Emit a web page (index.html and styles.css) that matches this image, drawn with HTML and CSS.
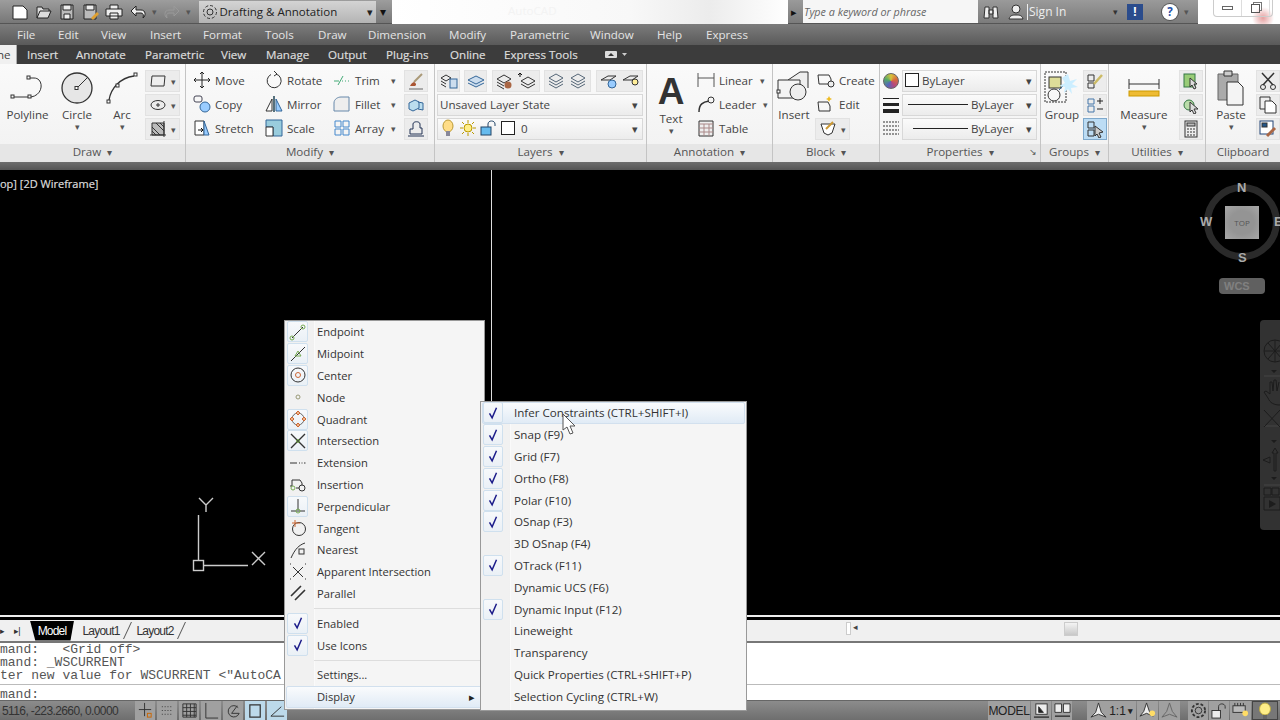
FILE: index.html
```html
<!DOCTYPE html>
<html lang="en">
<head>
    <meta charset="UTF-8">
    <title>Drafting &amp; Annotation</title>
    <link rel="stylesheet" href="styles.css">
</head>
<body>
<div class="app">
    <svg class="defs" width="0" height="0"><symbol id="tick" viewBox="0 0 16 16"><path d="M4 8.500l3 5L12 2" fill="none" stroke="#1c1c8a" stroke-width="1.700"/></symbol></svg>

    <!-- title bar -->
    <div class="titlebar">
        <div class="qat">
            <svg class="ic qi" viewBox="0 0 18 18"><path d="M2 3h10l4 4v9H2z" fill="#fff"/></svg>
            <svg class="ic qi" viewBox="0 0 18 18"><path d="M2 15V4h5l1 2h6v2M2 15l3-7h11l-3 7z" fill="#ddd"/></svg>
            <svg class="ic qi" viewBox="0 0 18 18"><path d="M3 2h12v14H3z" fill="#bbb"/><path d="M5 2h8v5H5zM6 11h6v5H6z" fill="#eee"/></svg>
            <svg class="ic qi" viewBox="0 0 18 18"><path d="M2 2h12v14H2z" fill="#bbb"/><path d="M4 2h8v5H4z" fill="#eee"/><path d="M9 15l6-6 2 2-6 6z" fill="#e0a030" stroke="none"/></svg>
            <svg class="ic qi" viewBox="0 0 18 18"><path d="M5 6V2h8v4M1 6h16v7H1zM5 10h8v6H5z" fill="#eee"/></svg>
            <svg class="ic qi" viewBox="0 0 18 18"><path d="M7 3L2 8l5 5v-3h5c2 0 3 2 2 5 3-2 3-8-2-8H7z" fill="#eee"/></svg>
            <span class="tiny">&#9662;</span>
            <svg class="ic qi dim" viewBox="0 0 18 18"><path d="M11 3l5 5-5 5v-3H6c-2 0-3 2-2 5-3-2-3-8 2-8h5z"/></svg>
            <span class="tiny">&#9662;</span>
            <div class="workspace">
                <svg class="ic" viewBox="0 0 18 18" width="18" height="18"><circle cx="9" cy="9" r="3"/><circle cx="9" cy="9" r="6.500" stroke-dasharray="3 2"/></svg>
                <span>Drafting &amp; Annotation</span>
                <span class="ws-arrow">&#9662;</span>
            </div>
            <span class="qat-more">&#9662;</span>
        </div>
        <div class="aero"><span class="aero-title">AutoCAD</span></div>
        <div class="infocenter">
            <span class="ic-play">&#9656;</span>
            <div class="search">Type a keyword or phrase</div>
            <div class="info-right">
                <svg class="ic" viewBox="0 0 18 18" width="18" height="18"><path d="M3 4h4v11H2zM11 4h4l1 11h-5zM7 7h4v4H7z" fill="#eee" stroke="#333"/></svg>
                <svg class="ic user" viewBox="0 0 18 18" width="18" height="18"><circle cx="9" cy="6" r="4" fill="#eee"/><path d="M2 16c1-4 4-4 7-4s6 0 7 4z" fill="#eee"/></svg>
                <span class="signin">Sign In</span>
                <span class="tiny si-arrow">&#9662;</span>
                <span class="xch">!</span>
                <span class="help">?</span>
                <span class="tiny">&#9662;</span>
            </div>
        </div>
        <div class="winbtns">
            <div class="wframe">
                <span class="wbtn"><i class="wmin"></i></span>
                <span class="wbtn"><i class="wmax"></i></span>
            </div>
        </div>
    </div>

    <!-- classic menu -->
    <div class="menubar">
        <span class="m" style="width:41px">File</span>
        <span class="m" style="width:43px">Edit</span>
        <span class="m" style="width:49px">View</span>
        <span class="m" style="width:53px">Insert</span>
        <span class="m" style="width:62px">Format</span>
        <span class="m" style="width:53px">Tools</span>
        <span class="m" style="width:50px">Draw</span>
        <span class="m" style="width:81px">Dimension</span>
        <span class="m" style="width:61px">Modify</span>
        <span class="m" style="width:80px">Parametric</span>
        <span class="m" style="width:67px">Window</span>
        <span class="m" style="width:49px">Help</span>
        <span class="m">Express</span>
    </div>

    <!-- ribbon tabs -->
    <div class="tabs">
        <span class="tab on">ne</span>
        <span class="tab" style="width:49px">Insert</span>
        <span class="tab" style="width:69px">Annotate</span>
        <span class="tab" style="width:76px">Parametric</span>
        <span class="tab" style="width:45px">View</span>
        <span class="tab" style="width:62px">Manage</span>
        <span class="tab" style="width:58px">Output</span>
        <span class="tab" style="width:64px">Plug-ins</span>
        <span class="tab" style="width:54px">Online</span>
        <span class="tab" style="width:101px">Express Tools</span>
        <svg class="tab-ic" viewBox="0 0 22 10" width="22" height="10"><rect x="0" y="1" width="12" height="7" rx="1" fill="#ddd"/><path d="M3 6l3-3 3 3z" fill="#333"/><path d="M17 3h5l-2.500 3z" fill="#ccc"/></svg>
    </div>

    <!-- ribbon -->
    <div class="ribbon">
        <section class="panel p-draw">
            <div class="pbody">
                <div class="big w-poly">
                    <svg class="ic" viewBox="0 0 36 36" width="36" height="36"><path d="M4 27h14M20 8h4c10 0 10 17-3 19"/><rect x="1" y="25" width="3" height="3"/><rect x="18" y="25" width="3" height="3"/><rect x="17" y="6" width="3" height="3"/></svg>
                    <span>Polyline</span>
                </div>
                <div class="big w-circle">
                    <svg class="ic" viewBox="0 0 36 36" width="36" height="36"><circle cx="18" cy="18" r="15" fill="#e6e6e6" stroke-width="1.300"/><path d="M18 18L29 7"/><rect x="16" y="16.500" width="3" height="3" fill="#fff"/></svg>
                    <span>Circle</span>
                    <b class="tiny">&#9662;</b>
                </div>
                <div class="big w-arc">
                    <svg class="ic" viewBox="0 0 36 36" width="36" height="36"><path d="M5 30C7 18 16 8 30 6" stroke-width="1.300"/><rect x="3" y="30" width="3" height="3" fill="#fff"/><rect x="12" y="14" width="3" height="3" fill="#fff"/><rect x="30" y="3" width="3" height="3" fill="#fff"/></svg>
                    <span>Arc</span>
                    <b class="tiny">&#9662;</b>
                </div>
                <div class="stack">
                    <div class="sbtn"><svg class="ic" viewBox="0 0 18 18" width="18" height="18"><path d="M3 4h13l-1 10H2z" fill="#eee"/></svg><b class="tiny">&#9662;</b></div>
                    <div class="sbtn"><svg class="ic" viewBox="0 0 18 18" width="18" height="18"><ellipse cx="9" cy="9" rx="7" ry="4.500"/><path d="M9 7v4M7 9h4"/></svg><b class="tiny">&#9662;</b></div>
                    <div class="sbtn"><svg class="ic" viewBox="0 0 18 18" width="18" height="18"><path d="M3 3h12v12H3z" fill="#bbb"/><path d="M3 7l8 8M3 11l4 4M7 3l8 8M11 3l4 4M1 15h16M15 1v16"/></svg><b class="tiny">&#9662;</b></div>
                </div>
            </div>
            <div class="ptitle">Draw <b>&#9662;</b></div>
        </section>

        <section class="panel p-modify">
            <div class="pbody mod-grid">
                <div class="tool"><svg class="ic" viewBox="0 0 18 18" width="18" height="18"><path d="M9 1v16M1 9h16M7 3l2-2 2 2M7 15l2 2 2-2M3 7L1 9l2 2M15 7l2 2-2 2" stroke="#222"/></svg><span>Move</span></div>
                <div class="tool"><svg class="ic" viewBox="0 0 18 18" width="18" height="18"><path d="M11 3a7 7 0 1 1-5 .500M9 0l3 3-3 2" /></svg><span>Rotate</span></div>
                <div class="tool"><svg class="ic" viewBox="0 0 18 18" width="18" height="18"><path d="M1 10h5M9 10h1M12 10h1M15 10h1M5 14l5-9" stroke="#4a7"/></svg><span>Trim</span><b class="tiny">&#9662;</b></div>
                <div class="sq"><svg class="ic" viewBox="0 0 18 18" width="18" height="18"><path d="M15 2L7 10" stroke="#a97" stroke-width="2"/><path d="M7 10c-3 1-3 3-4 4h5c2-1 1-3-1-4z" fill="#a53" stroke="none"/><path d="M2 17h14" stroke="#666"/></svg></div>

                <div class="tool"><svg class="ic" viewBox="0 0 18 18" width="18" height="18"><rect x="1" y="1" width="8" height="6" rx="2" stroke="#445"/><circle cx="12" cy="12" r="5" fill="#9cf" stroke="#369"/></svg><span>Copy</span></div>
                <div class="tool"><svg class="ic" viewBox="0 0 18 18" width="18" height="18"><path d="M9 1v16" stroke="#245" stroke-width="1.500"/><path d="M7 4L1 16h6z" fill="#fff"/><path d="M11 4l6 12h-6z" fill="#9cf" stroke="#369"/></svg><span>Mirror</span></div>
                <div class="tool"><svg class="ic" viewBox="0 0 18 18" width="18" height="18"><path d="M1 16V8C1 4 5 2 8 2h8v14z" fill="#eee" stroke="#68a"/></svg><span>Fillet</span><b class="tiny">&#9662;</b></div>
                <div class="sq"><svg class="ic" viewBox="0 0 18 18" width="18" height="18"><path d="M2 7l6-3 4 2v6l-6 3-4-2zM11 6l5 1v7l-5-1" fill="#bde" stroke="#369"/></svg></div>

                <div class="tool"><svg class="ic" viewBox="0 0 18 18" width="18" height="18"><path d="M2 2h9v14H2z" fill="#fff"/><path d="M11 2l5 14h-5z" fill="#9cf" stroke="#369"/><path d="M5 11h5M8 9l2 2-2 2" stroke="#111"/></svg><span>Stretch</span></div>
                <div class="tool"><svg class="ic" viewBox="0 0 18 18" width="18" height="18"><path d="M1 1h16v16H8V8H1z" fill="#9cd" stroke="#369"/><path d="M1 8h7v9H1z" fill="#fff"/></svg><span>Scale</span></div>
                <div class="tool"><svg class="ic" viewBox="0 0 18 18" width="18" height="18"><path d="M2 2h6v6H2zM10 2h6v6h-6zM2 10h6v6H2zM10 10h6v6h-6z" stroke="#48c"/></svg><span>Array</span><b class="tiny">&#9662;</b></div>
                <div class="sq"><svg class="ic" viewBox="0 0 18 18" width="18" height="18"><path d="M3 14V9h3V4c0-3 7-3 7 0v4h2v6z" stroke="#235"/><path d="M1 16h16" stroke="#235"/></svg></div>
            </div>
            <div class="ptitle">Modify <b>&#9662;</b></div>
        </section>

        <section class="panel p-layers">
            <div class="pbody layer-col">
                <div class="lrow">
                    <div class="lgroup g1"><svg class="ic" viewBox="0 0 18 18" width="18" height="18"><path d="M1 6l5-3 5 3-5 3zM1 9l5 3M1 12l5 3"/><rect x="10" y="7" width="7" height="9" fill="#cde" stroke="#369"/></svg></div>
                    <div class="lgroup g2"><svg class="ic" viewBox="0 0 18 18" width="18" height="18"><path d="M1 8l8-4 8 4-8 4zM1 11l8 4 8-4" stroke="#369" fill="#cde"/></svg></div>
                    <div class="lgroup g3"><svg class="ic" viewBox="0 0 18 18" width="18" height="18"><path d="M1 7l7-4 7 4-7 4zM1 10l7 4M1 13l7 4"/><circle cx="12" cy="13" r="3.500" fill="#a64" stroke="none"/></svg><svg class="ic" viewBox="0 0 18 18" width="18" height="18"><path d="M3 9l7-4 7 4-7 4zM3 12l7 4 7-4"/><path d="M2 1v4M0 3l2-2 2 2" stroke="#111"/></svg></div>
                    <div class="lgroup g4"><svg class="ic" viewBox="0 0 18 18" width="18" height="18"><path d="M1 6l7-4 7 4-7 4zM1 9l7 4 7-4M1 12l7 4 7-4" stroke="#567"/></svg><svg class="ic" viewBox="0 0 18 18" width="18" height="18"><path d="M1 6l7-4 7 4-7 4zM1 9l7 4 7-4M1 12l7 4 7-4" stroke="#567"/></svg></div>
                    <div class="lgroup g5"><svg class="ic" viewBox="0 0 18 18" width="18" height="18"><path d="M1 8l7-4h8l-6 4z"/><circle cx="12" cy="12" r="4" fill="#9cf" stroke="#369"/></svg><svg class="ic" viewBox="0 0 18 18" width="18" height="18"><path d="M1 8l7-4h8l-6 4z"/><circle cx="13" cy="10" r="3" fill="#fe9"/></svg></div>
                </div>
                <div class="combo"><span>Unsaved Layer State</span><b>&#9662;</b></div>
                <div class="combo">
                    <svg viewBox="0 0 16 18" width="16" height="18"><ellipse cx="8" cy="7" rx="5" ry="6" fill="#fd8" stroke="#b93"/><rect x="6" y="12" width="4" height="5" fill="#889"/></svg>
                    <svg class="ic" viewBox="0 0 18 18" width="18" height="18"><circle cx="9" cy="9" r="4" fill="#fe8" stroke="#b90"/><path d="M9 1v3M9 14v3M1 9h3M14 9h3M3 3l2 2M13 13l2 2M15 3l-2 2M5 13l-2 2" stroke="#b90"/></svg>
                    <svg class="ic" viewBox="0 0 18 18" width="18" height="18"><rect x="1" y="8" width="10" height="8" fill="#6be" stroke="#246"/><path d="M8 8V5c0-4 7-4 7 0v2" stroke="#246"/></svg>
                    <i class="swatch"></i>
                    <span class="lname">0</span>
                    <b>&#9662;</b>
                </div>
            </div>
            <div class="ptitle">Layers <b>&#9662;</b></div>
        </section>

        <section class="panel p-annot">
            <div class="pbody">
                <div class="big w-text">
                    <span class="bigA">A</span>
                    <span>Text</span>
                    <b class="tiny">&#9662;</b>
                </div>
                <div class="vtools">
                    <div class="tool"><svg class="ic" viewBox="0 0 18 18" width="18" height="18"><path d="M1 2v14M17 2v14M1 7h16" stroke="#555"/></svg><span>Linear</span><b class="tiny">&#9662;</b></div>
                    <div class="tool"><svg class="ic" viewBox="0 0 18 18" width="18" height="18"><path d="M2 17c0-8 4-10 10-11" stroke-width="1.500"/><circle cx="14" cy="5" r="3"/></svg><span>Leader</span><b class="tiny">&#9662;</b></div>
                    <div class="tool"><svg class="ic" viewBox="0 0 18 18" width="18" height="18"><path d="M2 2h14v15H2z" fill="#eee"/><path d="M2 5h14M2 9h14M2 13h14M7 5v12M12 5v12" stroke="#a88"/></svg><span>Table</span></div>
                </div>
            </div>
            <div class="ptitle">Annotation <b>&#9662;</b></div>
        </section>

        <section class="panel p-block">
            <div class="pbody">
                <div class="big w-insert">
                    <svg class="ic" viewBox="0 0 36 36" width="36" height="36"><path d="M12 10L24 2h8v16" fill="#eee"/><path d="M2 10h22v18H2z" fill="#f4f4f4"/><circle cx="22" cy="22" r="8" fill="#eee"/><rect x="1" y="20" width="3" height="3" fill="#fff"/></svg>
                    <span>Insert</span>
                </div>
                <div class="vtools block-tools">
                    <div class="tool"><svg class="ic" viewBox="0 0 18 18" width="18" height="18"><path d="M1 4h11l2 4v5H2z"/><circle cx="14" cy="13" r="3" fill="#eee"/></svg><span>Create</span></div>
                    <div class="tool"><svg class="ic" viewBox="0 0 18 18" width="18" height="18"><path d="M1 7h10l2 4v5H2z"/><path d="M12 1l1 2 2 1-2 1-1 2-1-2-2-1 2-1z" fill="#eb2" stroke="none"/></svg><span>Edit</span></div>
                    <div class="split"><svg class="ic" viewBox="0 0 18 18" width="18" height="18"><path d="M2 4h14l-3 9-4 2-4-2z" fill="#fff"/><path d="M7 9l7-7" stroke="#c93" stroke-width="2"/></svg><b class="tiny">&#9662;</b></div>
                </div>
            </div>
            <div class="ptitle">Block <b>&#9662;</b></div>
        </section>

        <section class="panel p-props">
            <div class="pbody prop-col">
                <div class="prow">
                    <i class="wheel"></i>
                    <div class="combo"><i class="swatch"></i><span>ByLayer</span><b>&#9662;</b></div>
                </div>
                <div class="prow">
                    <svg viewBox="0 0 16 16" width="16" height="16"><path d="M0 1h16v1H0zM0 6h16v3H0zM0 12h16v4H0z" fill="#222"/></svg>
                    <div class="combo"><i class="pline"></i><span>ByLayer</span><b>&#9662;</b></div>
                </div>
                <div class="prow">
                    <svg viewBox="0 0 16 16" width="16" height="16"><path d="M0 1h16M0 5h16M0 9h16M0 13h16" stroke="#333" stroke-dasharray="2 1"/></svg>
                    <div class="combo"><i class="pline short"></i><span>ByLayer</span><b>&#9662;</b></div>
                </div>
            </div>
            <div class="ptitle">Properties <b>&#9662;</b><em class="launch">&#8600;</em></div>
        </section>

        <section class="panel p-groups">
            <div class="pbody">
                <div class="big w-group">
                    <svg class="ic" viewBox="0 0 36 36" width="36" height="36"><path d="M1 2h21v30H1z" stroke-dasharray="2 1"/><rect x="5" y="7" width="12" height="11" fill="#dd9"/><circle cx="10" cy="25" r="6"/><path d="M15 20l6-6" stroke="#369"/><path d="M24 4l2 7 7-2-5 5 6 3-7 1 1 6-4-5-4 4 1-6-6-1 6-3-3-5z" fill="#cef" stroke="none"/></svg>
                    <span>Group</span>
                </div>
                <div class="vbtns">
                    <div class="sq"><svg class="ic" viewBox="0 0 18 18" width="18" height="18"><path d="M2 3h6v6H2zM2 11h6v5H2z"/><path d="M8 12l8-9" stroke="#cb6" stroke-width="2.500"/></svg></div>
                    <div class="sq"><svg class="ic" viewBox="0 0 18 18" width="18" height="18"><path d="M2 3h6v5H2zM2 10h6v6H2z" stroke="#47a"/><path d="M11 5h6M14 2v6M11 13h6" stroke="#222"/></svg></div>
                    <div class="sq on"><svg class="ic" viewBox="0 0 18 18" width="18" height="18"><path d="M2 2h6v6H2zM2 10h6v6H2z"/><path d="M9 6l8 6-4 1 2 4-2 1-2-4-2 2z" fill="#ccc"/></svg></div>
                </div>
            </div>
            <div class="ptitle">Groups <b>&#9662;</b></div>
        </section>

        <section class="panel p-util">
            <div class="pbody">
                <div class="big w-measure">
                    <svg class="ic" viewBox="0 0 36 30" width="36" height="30"><path d="M3 6v10M33 6v10M3 11h30" stroke="#333"/><rect x="3" y="18" width="30" height="5" fill="#eb3" stroke="#c90"/></svg>
                    <span>Measure</span>
                    <b class="tiny">&#9662;</b>
                </div>
                <div class="vbtns">
                    <div class="sq"><svg class="ic" viewBox="0 0 18 18" width="18" height="18"><rect x="2" y="2" width="11" height="13" fill="#9c7" stroke="#374"/><path d="M8 6l7 6-3 0 2 4-2 1-2-4-2 2z" fill="#ddd"/></svg></div>
                    <div class="sq"><svg class="ic" viewBox="0 0 18 18" width="18" height="18"><circle cx="7" cy="9" r="5" fill="#bda" stroke="#374"/><path d="M8 6l8 7-4 0 2 4-2 1-2-4-2 2z" fill="#ddd"/></svg></div>
                    <div class="sq"><svg class="ic" viewBox="0 0 18 18" width="18" height="18"><rect x="3" y="1" width="12" height="16" fill="#eee"/><rect x="5" y="3" width="8" height="3" fill="#bbb"/><path d="M5 9h8M5 12h8M5 15h8" stroke-dasharray="2 1"/></svg></div>
                </div>
            </div>
            <div class="ptitle">Utilities <b>&#9662;</b></div>
        </section>

        <section class="panel p-clip">
            <div class="pbody">
                <div class="big w-paste">
                    <svg class="ic" viewBox="0 0 30 36" width="30" height="36"><path d="M2 4h20v26H2z" fill="#aaa" stroke="#666"/><path d="M8 1h8v5H8z" fill="#ccc"/><path d="M11 12h11l5 5v18H11z" fill="#f4f4f4"/></svg>
                    <span>Paste</span>
                    <b class="tiny">&#9662;</b>
                </div>
                <div class="vbtns">
                    <div class="sq"><svg class="ic" viewBox="0 0 18 18" width="18" height="18"><path d="M3 1l11 12M15 1L4 13" stroke-width="1.500"/><circle cx="4" cy="15" r="2.500"/><circle cx="14" cy="15" r="2.500"/></svg></div>
                    <div class="sq"><svg class="ic" viewBox="0 0 18 18" width="18" height="18"><path d="M1 1h10v12H1z" fill="#eee"/><path d="M6 5h7l4 4v8H6z" fill="#fff"/></svg></div>
                    <div class="sq"><svg class="ic" viewBox="0 0 18 18" width="18" height="18"><rect x="1" y="1" width="13" height="13" fill="#fff" stroke="#247"/><rect x="3" y="3" width="5" height="4" fill="#258"/><path d="M8 16l8-8" stroke="#a64" stroke-width="3"/></svg></div>
                </div>
            </div>
            <div class="ptitle">Clipboard</div>
        </section>
    </div>
    <div class="ribbon-foot"></div>

    <!-- drawing area -->
    <div class="canvas">
        <div class="viewlabel">op] [2D Wireframe]</div>
        <i class="cross-v"></i>
        <i class="cross-h"></i>

        <div class="ucs">
            <svg viewBox="0 0 80 85" width="80" height="85"><g stroke="#ccc" fill="none" stroke-width="1.400"><path d="M9.500 25v45M14 75.500h45M63 62l13 13M76 62L63 75M10 8l7 7 7-7M17 15v7"/><rect x="4.500" y="70.500" width="10" height="10"/></g></svg>
        </div>

        <div class="cube">
            <div class="ring"></div>
            <div class="cube-top"><span>TOP</span></div>
            <span class="cp n">N</span>
            <span class="cp s">S</span>
            <span class="cp w">W</span>
            <span class="cp e">E</span>
        </div>
        <div class="wcs">WCS</div>
        <div class="navbar">
            <svg viewBox="0 0 20 210" width="20" height="210"><g fill="none" stroke="#1c1c1c">
                <circle cx="15" cy="31" r="11"/><path d="M15 20v22M4 31h22M8 23l14 16M8 39l14-16"/>
                <path d="M4 56h16M4 106h16M4 165h16" stroke="#444"/>
                <path d="M8 78l-4-6 2-1 4 3V62l2 0 1 9 1-11 2 0 1 11 2-9M8 78c2 5 6 7 12 7"/>
                <path d="M4 90l16 17M20 90L4 107"/>
                <path d="M15 128l-3 5h2v18h2v-18h2zM10 143l-7-3 7-3z"/>
                <path d="M4 168h7v7H4zM12 168h7v7h-7zM4 177h16v13H4z"/>
            </g>
            <path d="M9 180v8l7-4z" fill="#1c1c1c"/><path d="M11 50h6l-3 3zM11 120h6l-3 3zM11 157h6l-3 3z" fill="#1c1c1c"/></svg>
        </div>
    </div>

    <!-- layout tabs -->
    <div class="layoutbar">
        <div class="ltabs">
            <span class="larrow">&#9656;</span>
            <span class="larrow">&#9656;|</span>
            <span class="ltab active">Model</span>
            <span class="ltab">Layout1</span>
            <span class="ltab">Layout2</span>
        </div>
        <div class="hscroll">
            <i class="hs-end"></i>
            <span class="hs-left">&#9666;</span>
            <i class="hs-thumb"></i>
        </div>
    </div>

    <!-- command line -->
    <div class="cmdline">
        <div class="cmdhist">mand:   &lt;Grid off&gt;
mand: _WSCURRENT
ter new value for WSCURRENT &lt;"AutoCA</div>
        <div class="cmdprompt">mand:</div>
    </div>

    <!-- status bar -->
    <div class="statusbar">
        <span class="coords">5116, -223.2660, 0.0000</span>
        <div class="sgroup">
            <span class="sb"><svg class="ic" viewBox="0 0 18 18" width="18" height="18"><path d="M8 1v14M2 8h13"/><rect x="11" y="12" width="4" height="4" stroke="#c60"/></svg></span>
            <span class="sb"><svg class="ic" viewBox="0 0 18 18" width="18" height="18"><path d="M3 5h12M3 9h12M3 13h12" stroke-dasharray="1 2"/></svg></span>
            <span class="sb"><svg class="ic" viewBox="0 0 18 18" width="18" height="18"><path d="M2 2h14v14H2zM2 6h14M2 10h14M2 14h14M6 2v14M10 2v14M14 2v14"/></svg></span>
            <span class="sb"><svg class="ic" viewBox="0 0 18 18" width="18" height="18"><path d="M3 1v16h13"/></svg></span>
            <span class="sb"><svg class="ic" viewBox="0 0 18 18" width="18" height="18"><path d="M14 6a6 6 0 1 0 1 6H7l6-8"/></svg></span>
            <span class="sb lit"><svg class="ic" viewBox="0 0 18 18" width="18" height="18"><path d="M3 3h11v13H3z" stroke-width="1.300"/></svg></span>
            <span class="sb lit"><svg class="ic" viewBox="0 0 18 18" width="18" height="18"><path d="M2 15h14M2 15L13 5"/></svg></span>
        </div>
        <div class="sright">
            <span class="sb txt">MODEL</span>
            <span class="sb"><svg class="ic" viewBox="0 0 18 18" width="18" height="18"><rect x="3" y="2" width="12" height="11" fill="#eee"/><path d="M6 11V5l5 6z" fill="#222"/><path d="M1 16h16" stroke-width="1.500"/></svg></span>
            <span class="sb"><svg class="ic" viewBox="0 0 18 18" width="18" height="18"><path d="M1 2h7v9H1zM10 2h7v9h-7z" fill="#eee"/><path d="M1 15h16" stroke-width="1.500"/></svg></span>
            <i class="sgap g-a"></i>
            <span class="sb scale"><svg class="ic" viewBox="0 0 18 18" width="18" height="18"><path d="M9 1l3 10 5 5-8-3-8 3 5-5z" fill="#eee"/></svg>1:1 <b>&#9662;</b></span>
            <span class="sb w21"><svg class="ic" viewBox="0 0 18 18" width="18" height="18"><path d="M8 1l3 9 4 5-7-3-7 3 4-5z" fill="#eee"/><circle cx="14" cy="12" r="3" fill="#fd6" stroke="none"/></svg></span>
            <span class="sb w21"><svg class="ic" viewBox="0 0 18 18" width="18" height="18"><path d="M9 1l3 9 5 6-8-3-8 3 5-6z" stroke="#666"/></svg></span>
            <i class="sgap g-b"></i>
            <span class="sb"><svg class="ic" viewBox="0 0 18 18" width="18" height="18"><circle cx="9" cy="9" r="3.500"/><circle cx="9" cy="9" r="7" stroke-dasharray="3 2" stroke-width="2"/></svg></span>
            <span class="sb"><svg class="ic" viewBox="0 0 18 18" width="18" height="18"><rect x="1" y="9" width="9" height="8" fill="#eee"/><path d="M8 9V5c0-4 7-4 7 0v2"/></svg></span>
            <span class="sb w21"><svg class="ic" viewBox="0 0 18 18" width="18" height="18"><rect x="1" y="4" width="13" height="7" fill="#bbb"/><path d="M3 1v3M6 1v3M9 1v3M12 1v3"/><circle cx="14" cy="12" r="3" fill="#fd6" stroke="none"/></svg></span>
            <span class="sb lamp"><svg viewBox="0 0 18 18" width="18" height="18"><ellipse cx="9" cy="7" rx="5.500" ry="6" fill="#fe8" stroke="#ba4"/><rect x="7" y="13" width="4" height="4" fill="#666"/></svg></span>
        </div>
    </div>

    <!-- object snap menu -->
    <div class="menu snapmenu">
        <ul>
            <li><span class="gut boxed"><svg class="ic" viewBox="0 0 18 18" width="18" height="18"><path d="M3 15L14 4"/><rect x="12" y="2" width="4" height="4" rx="2" stroke="#7a5"/><rect x="1" y="13" width="4" height="4" rx="2" stroke="#7a5"/></svg></span>Endpoint</li>
            <li><span class="gut boxed"><svg class="ic" viewBox="0 0 18 18" width="18" height="18"><path d="M2 16L16 2"/><path d="M9 6l3 5H6z" stroke="#7a5"/></svg></span>Midpoint</li>
            <li><span class="gut boxed"><svg class="ic" viewBox="0 0 18 18" width="18" height="18"><circle cx="9" cy="9" r="7"/><circle cx="9" cy="9" r="2.500" stroke="#c63"/></svg></span>Center</li>
            <li><span class="gut"><svg class="ic" viewBox="0 0 18 18" width="18" height="18"><circle cx="9" cy="9" r="2" stroke="#997"/></svg></span>Node</li>
            <li><span class="gut boxed"><svg class="ic" viewBox="0 0 18 18" width="18" height="18"><circle cx="9" cy="9" r="6" stroke="#666"/><path d="M9 1l2 2-2 2-2-2zM9 13l2 2-2 2-2-2zM1 9l2-2 2 2-2 2zM13 9l2-2 2 2-2 2z" fill="#e9b48a" stroke="#c63"/></svg></span>Quadrant</li>
            <li><span class="gut boxed"><svg class="ic" viewBox="0 0 18 18" width="18" height="18"><path d="M2 2l14 14M16 2L2 16" stroke-width="1.400"/><circle cx="9" cy="9" r="1.500" stroke="#7a5"/></svg></span>Intersection</li>
            <li><span class="gut"><svg class="ic" viewBox="0 0 18 18" width="18" height="18"><path d="M1 9h7M10 9h1M12.500 9h1M15 9h1.500"/></svg></span>Extension</li>
            <li><span class="gut"><svg class="ic" viewBox="0 0 18 18" width="18" height="18"><path d="M3 11V5h8l2 3v2M3 11H1M7 13h3"/><circle cx="4" cy="13" r="2" stroke="#7a5"/><circle cx="13" cy="13" r="3"/></svg></span>Insertion</li>
            <li><span class="gut boxed"><svg class="ic" viewBox="0 0 18 18" width="18" height="18"><path d="M9 2v11M2 14h14"/><circle cx="9" cy="14" r="2" stroke="#7a5"/></svg></span>Perpendicular</li>
            <li><span class="gut"><svg class="ic" viewBox="0 0 18 18" width="18" height="18"><circle cx="10" cy="10" r="6.500" fill="#f1f1f1"/><path d="M3 4h8M6 1v7" stroke="#c63"/></svg></span>Tangent</li>
            <li><span class="gut"><svg class="ic" viewBox="0 0 18 18" width="18" height="18"><path d="M2 17C6 8 10 4 16 2"/><rect x="10" y="8" width="5" height="5"/></svg></span>Nearest</li>
            <li><span class="gut"><svg class="ic" viewBox="0 0 18 18" width="18" height="18"><path d="M4 4l10 10M14 4L4 14"/><path d="M1 1h1M16 1h1M1 16h1M16 16h1"/></svg></span>Apparent Intersection</li>
            <li><span class="gut"><svg class="ic" viewBox="0 0 18 18" width="18" height="18"><path d="M2 12L12 2M6 16L16 6" stroke-width="1.600"/></svg></span>Parallel</li>
            <li class="sep"></li>
            <li><span class="gut boxed"><svg class="tick"><use href="#tick"/></svg></span>Enabled</li>
            <li><span class="gut boxed"><svg class="tick"><use href="#tick"/></svg></span>Use Icons</li>
            <li class="sep"></li>
            <li><span class="gut"></span>Settings...</li>
            <li class="hot"><span class="gut"></span>Display<b class="sub">&#9656;</b></li>
        </ul>
    </div>

    <!-- display submenu -->
    <div class="menu dispmenu">
        <ul>
            <li class="hot"><span class="gut boxed"><svg class="tick"><use href="#tick"/></svg></span>Infer Constraints (CTRL+SHIFT+I)</li>
            <li><span class="gut boxed"><svg class="tick"><use href="#tick"/></svg></span>Snap (F9)</li>
            <li><span class="gut boxed"><svg class="tick"><use href="#tick"/></svg></span>Grid (F7)</li>
            <li><span class="gut boxed"><svg class="tick"><use href="#tick"/></svg></span>Ortho (F8)</li>
            <li><span class="gut boxed"><svg class="tick"><use href="#tick"/></svg></span>Polar (F10)</li>
            <li><span class="gut boxed"><svg class="tick"><use href="#tick"/></svg></span>OSnap (F3)</li>
            <li><span class="gut"></span>3D OSnap (F4)</li>
            <li><span class="gut boxed"><svg class="tick"><use href="#tick"/></svg></span>OTrack (F11)</li>
            <li><span class="gut"></span>Dynamic UCS (F6)</li>
            <li><span class="gut boxed"><svg class="tick"><use href="#tick"/></svg></span>Dynamic Input (F12)</li>
            <li><span class="gut"></span>Lineweight</li>
            <li><span class="gut"></span>Transparency</li>
            <li><span class="gut"></span>Quick Properties (CTRL+SHIFT+P)</li>
            <li><span class="gut"></span>Selection Cycling (CTRL+W)</li>
        </ul>
    </div>

    <svg class="cursor" viewBox="0 0 14 22" width="14" height="22"><path d="M1 1v16l4-3 3 7 3-1-3-7h5z" fill="#fff" stroke="#555"/></svg>
</div>
</body>
</html>
```

FILE: styles.css
```css
* {
    box-sizing: border-box;
}
html, body {
    margin: 0;
    height: 100%;
    overflow: hidden;
}
body {
    font-family: "Open Sans", "Noto Sans", sans-serif;
    font-size: 11.6px;
    background: #000;
}
.app {
    position: relative;
    width: 1280px;
    height: 720px;
    display: flex;
    flex-direction: column;
    overflow: hidden;
}
.defs {
    position: absolute;
}
.ic {
    fill: none;
    stroke: #333;
    stroke-width: 1;
    flex: none;
}
.tiny {
    font-size: 9px;
    color: #555;
    font-weight: normal;
}

/* title bar */
.titlebar {
    height: 24px;
    display: flex;
    flex: none;
    background: #fdfdfd;
}
.qat {
    width: 392px;
    display: flex;
    align-items: center;
    padding-left: 11px;
    gap: 5.5px;
    background: linear-gradient(#9d9d9d, #777);
    border-bottom: 1px solid #555;
}
.qi {
    width: 18px;
    height: 18px;
    stroke: #222;
}
.qi.dim {
    stroke: #999;
}
.workspace {
    width: 177px;
    height: 22px;
    margin-left: 2px;
    display: flex;
    align-items: center;
    gap: 1px;
    padding-left: 2px;
    background: linear-gradient(#d4d4d4, #b4b4b4);
    color: #222;
    font-size: 11.5px;
}
.ws-arrow {
    margin-left: auto;
    margin-right: 3px;
    font-size: 11px;
}
.qat-more {
    color: #111;
    margin-left: -1px;
}
.aero {
    width: 396px;
    background: linear-gradient(90deg, #fff, #f8f8f8 60%, #ececec 80%, #fff);
    position: relative;
}
.aero-title {
    position: absolute;
    left: 116px;
    top: 3px;
    color: #f3f3f3;
}
.infocenter {
    width: 410px;
    display: flex;
    align-items: center;
    background: linear-gradient(#9a9a9a, #7b7b7b);
    border-bottom: 1px solid #555;
}
.ic-play {
    width: 15px;
    padding-left: 3px;
    color: #111;
    font-size: 11px;
}
.search {
    width: 175px;
    height: 23px;
    background: #f6f6f6;
    color: #666;
    font-style: italic;
    font-size: 10.8px;
    line-height: 23px;
    padding-left: 1px;
    white-space: nowrap;
}
.info-right {
    display: flex;
    align-items: center;
    flex: 1;
    padding-left: 4px;
}
.user {
    margin-left: 7px;
}
.signin {
    border-left: 1px solid #eee;
    color: #eee;
    margin-left: 2px;
    width: 86px;
    padding-left: 1px;
    line-height: 16px;
    font-size: 12px;
}
.si-arrow {
    color: #333;
}
.xch {
    width: 16px;
    height: 16px;
    margin-left: 9px;
    background: #2b4c8c;
    color: #fff;
    font-weight: bold;
    text-align: center;
    line-height: 16px;
}
.help {
    width: 16px;
    height: 16px;
    margin-left: 19px;
    margin-right: 6px;
    border-radius: 50%;
    background: #fff;
    color: #2450a8;
    font-weight: bold;
    text-align: center;
    line-height: 16px;
    box-shadow: 0 0 0 1px #555;
}
.winbtns {
    flex: 1;
    background: radial-gradient(circle at 65px 18px, #e6a0a0, #fff 11px);
}
.wframe {
    display: flex;
    margin-left: 15px;
    height: 17px;
    border: 1px solid #ccc;
    border-top: none;
    border-radius: 0 0 4px 4px;
    width: 60px;
}
.wbtn {
    width: 28px;
    border-right: 1px solid #ddd;
    display: flex;
    align-items: center;
    justify-content: center;
}
.wmin {
    width: 11px;
    height: 4px;
    border: 1px solid #666;
}
.wmax {
    width: 9px;
    height: 9px;
    border: 1px solid #555;
    box-shadow: 2px -2px 0 -1px #fff, 2px -2px 0 0 #777;
}

/* menu bar */
.menubar {
    height: 21px;
    flex: none;
    display: flex;
    align-items: center;
    padding-left: 17px;
    background: linear-gradient(#7c7c7c, #5a5a5a);
    color: #e4e4e4;
}
.m {
    white-space: nowrap;
}

/* tabs */
.tabs {
    height: 19px;
    flex: none;
    display: flex;
    align-items: center;
    background: #3c3c3c;
    color: #ddd;
    -webkit-text-stroke: 0.2px #ddd;
}
.tab {
    white-space: nowrap;
}
.tab.on {
    width: 27px;
    height: 19px;
    padding-right: 10px;
    background: linear-gradient(90deg, #f0f0f0 60%, #3c3c3c 63%);
    color: #444;
    -webkit-text-stroke: 0;
    text-indent: -3px;
    line-height: 19px;
}

/* ribbon */
.ribbon {
    height: 98px;
    flex: none;
    display: flex;
    background: #f2f2f2;
    color: #444;
}
.panel {
    display: flex;
    flex-direction: column;
    flex: none;
    border-right: 1px solid #c4c4c4;
    box-shadow: inset -1px 0 0 #fff;
}
.pbody {
    height: 80px;
    display: flex;
    padding-top: 6px;
    background: linear-gradient(#fafafa, #f3f3f3);
}
.ptitle {
    height: 18px;
    text-align: center;
    line-height: 15px;
    background: #e6e6e6;
    color: #555;
    position: relative;
}
.ptitle b {
    font-size: 10px;
    font-weight: normal;
    margin-left: 3px;
}
.launch {
    position: absolute;
    right: 3px;
    top: 0;
    font-style: normal;
    font-size: 9px;
}
.p-draw { width: 186px; }
.p-modify { width: 249px; }
.p-layers { width: 212px; }
.p-annot { width: 126px; }
.p-block { width: 107px; }
.p-props { width: 161px; }
.p-groups { width: 68px; }
.p-util { width: 97px; }
.p-clip { width: 74px; border-right: none; }

.big {
    display: flex;
    flex-direction: column;
    align-items: center;
    text-align: center;
    line-height: 14px;
    padding-top: 0;
}
.big span {
    margin-top: 2px;
}
.big .tiny {
    line-height: 9px;
}
.w-poly { width: 55px; }
.w-circle { width: 44px; }
.w-arc { width: 46px; }
.stack {
    display: flex;
    flex-direction: column;
    gap: 2px;
}
.sbtn, .split {
    width: 35px;
    height: 22px;
    background: #ececec;
    border: 1px solid #e2e2e2;
    display: flex;
    align-items: center;
    padding-left: 3px;
    justify-content: space-between;
    padding-right: 3px;
}
.mod-grid {
    display: grid;
    grid-template-columns: 72px 68px 71px 24px;
    grid-auto-rows: 24px;
    padding-left: 7px;
    padding-top: 4px;
}
.tool {
    display: flex;
    align-items: center;
    gap: 4px;
    white-space: nowrap;
}
.mod-grid .sq {
    margin-top: 2px;
}
.p-modify .tool:first-child,
.p-modify .tool:nth-child(2),
.p-modify .tool:nth-child(3) {
    gap: 4px;
}
.mod-grid .tiny {
    margin-left: auto;
    margin-right: 8px;
}
.sq {
    width: 24px;
    height: 22px;
    background: #ececec;
    border: 1px solid #e2e2e2;
    display: flex;
    align-items: center;
    justify-content: center;
}
.sq.on {
    background: #bcdcf4;
    border-color: #7fa9cc;
}
.layer-col {
    flex-direction: column;
    padding-left: 2px;
    padding-right: 3px;
    gap: 2px;
}
.lrow {
    display: flex;
    height: 22px;
}
.lgroup {
    display: flex;
    align-items: center;
    justify-content: center;
    gap: 4px;
    background: #ececec;
    border: 1px solid #e2e2e2;
}
.g1 { width: 23px; }
.g2 { width: 23px; margin-left: 4px; }
.g3 { width: 48px; margin-left: 5px; }
.g4 { width: 47px; margin-left: 4px; }
.g5 { width: 47px; margin-left: 5px; }
.combo {
    height: 22px;
    display: flex;
    align-items: center;
    gap: 3px;
    padding: 0 4px 2px 2px;
    background: linear-gradient(#fbfbfb, #ececec);
    border: 1px solid #d8d8d8;
    color: #444;
    white-space: nowrap;
}
.combo b {
    margin-left: auto;
    font-size: 11px;
    font-weight: normal;
}
.swatch {
    width: 14px;
    height: 14px;
    background: #fff;
    border: 1px solid #222;
}
.lname {
    margin-left: 3px;
}
.bigA {
    font-family: "Liberation Sans", sans-serif;
    font-weight: bold;
    font-size: 37px;
    line-height: 40px;
    color: #333;
    height: 38px;
}
.w-text {
    width: 48px;
}
.vtools {
    display: flex;
    flex-direction: column;
    padding-left: 2px;
    margin-top: -2px;
}
.vtools .tool {
    height: 24px;
    gap: 4px;
}
.vtools .tiny {
    margin-left: 3px;
}
.block-tools {
    padding-left: 0;
}
.block-tools .tool {
    padding-left: 2px;
}
.split {
    margin-top: 2px;
}
.w-insert {
    width: 42px;
}
.prop-col {
    flex-direction: column;
    padding-left: 3px;
    gap: 2px;
}
.prow {
    display: flex;
    align-items: center;
    gap: 3px;
}
.prow > svg, .wheel {
    width: 16px;
    height: 16px;
    flex: none;
}
.wheel {
    border-radius: 50%;
    background: conic-gradient(#d9c43c, #d86a3c, #b4477f, #5566bb, #55aa66, #d9c43c);
    border: 1px solid #666;
}
.prow .combo {
    width: 135px;
}
.pline {
    width: 60px;
    height: 1px;
    background: #222;
    margin-left: 3px;
}
.pline.short {
    width: 55px;
    margin-left: 8px;
}
.w-group {
    width: 42px;
}
.vbtns {
    display: flex;
    flex-direction: column;
    gap: 2px;
}
.w-measure {
    width: 70px;
}
.w-measure svg {
    margin-top: 3px;
    margin-bottom: 3px;
}
.w-paste {
    width: 52px;
}
.ribbon-foot {
    height: 8px;
    flex: none;
    background: linear-gradient(#6e6e6e, #555);
}

/* canvas */
.canvas {
    flex: 1;
    position: relative;
    background: #000;
    overflow: hidden;
}
.viewlabel {
    position: absolute;
    left: 0;
    top: 6px;
    color: #ddd;
    font-size: 11px;
    -webkit-text-stroke: 0.2px #ddd;
}
.cross-v {
    position: absolute;
    left: 491px;
    top: 0;
    bottom: 0;
    width: 1px;
    background: #ddd;
}
.cross-h {
    position: absolute;
    left: 0;
    right: 0;
    top: 445px;
    height: 2px;
    background: #eee;
}
.ucs {
    position: absolute;
    left: 189px;
    top: 320px;
}
.cube {
    position: absolute;
    left: 1202px;
    top: 12px;
    width: 80px;
    height: 80px;
}
.ring {
    position: absolute;
    inset: 2px;
    border: 7px solid #2a2a2a;
    border-radius: 50%;
}
.cube-top {
    position: absolute;
    left: 23px;
    top: 24px;
    width: 34px;
    height: 33px;
    background: radial-gradient(#949494 50%, #a8a8a8);
    color: #555;
    font-size: 8px;
    text-align: center;
    line-height: 33px;
}
.cp {
    position: absolute;
    font-family: "Liberation Sans", sans-serif;
    font-weight: bold;
    font-size: 13px;
    color: #aaa;
    line-height: 14px;
}
.cp.n { left: 35px; top: -1px; }
.cp.s { left: 36px; top: 69px; }
.cp.w { left: -2px; top: 33px; }
.cp.e { left: 72px; top: 33px; }
.wcs {
    position: absolute;
    left: 1219px;
    top: 108px;
    width: 46px;
    height: 16px;
    border-radius: 4px;
    background: #606060;
    color: #808080;
    font-family: "Liberation Sans", sans-serif;
    font-size: 11px;
    font-weight: bold;
    line-height: 16px;
    padding-left: 5px;
}
.navbar {
    position: absolute;
    left: 1260px;
    top: 150px;
    width: 20px;
    height: 210px;
    border-radius: 4px 0 0 4px;
    background: #323232;
}

/* layout tabs */
.layoutbar {
    height: 23px;
    flex: none;
    display: flex;
    background: #f0f0f0;
    border-bottom: 2px solid #777;
}
.ltabs {
    width: 285px;
    display: flex;
    align-items: center;
    color: #333;
    font-family: "Liberation Sans", sans-serif;
    font-size: 12px;
    letter-spacing: -0.8px;
}
.larrow {
    width: 14px;
    font-size: 9px;
    color: #333;
}
.ltab {
    width: 54px;
    text-align: center;
    line-height: 20px;
    position: relative;
}
.ltab::after {
    content: "";
    position: absolute;
    right: 0;
    top: 1px;
    height: 17px;
    width: 1px;
    background: #555;
    transform: skewX(-25deg);
}
.ltab.active {
    width: 44px;
    margin-left: 2px;
    background: #000;
    color: #fff;
    clip-path: polygon(0 0, 100% 0, 92% 100%, 12% 100%);
}
.ltab.active::after {
    display: none;
}
.hscroll {
    flex: 1;
    position: relative;
}
.hs-end {
    position: absolute;
    left: 561px;
    top: 2px;
    width: 5px;
    height: 13px;
    background: #fff;
    border: 1px solid #ccc;
}
.hs-left {
    position: absolute;
    left: 568px;
    top: 0;
    font-size: 9px;
    color: #444;
}
.hs-thumb {
    position: absolute;
    left: 779px;
    top: 2px;
    width: 14px;
    height: 14px;
    background: linear-gradient(#f4f4f4, #c8c8c8);
    border: 1px solid #ccc;
}

/* command line */
.cmdline {
    height: 57px;
    flex: none;
    background: #fff;
    font-family: "Liberation Mono", monospace;
    font-size: 13px;
    color: #555;
}
.cmdhist {
    height: 42px;
    line-height: 13px;
    white-space: pre;
    border-bottom: 1px solid #bbb;
}
.cmdprompt {
    line-height: 16px;
    padding-top: 2px;
}

/* status bar */
.statusbar {
    height: 20px;
    flex: none;
    display: flex;
    align-items: center;
    background: linear-gradient(#8c8c8c, #6e6e6e);
    border-top: 1px solid #666;
    color: #222;
}
.coords {
    width: 135px;
    padding-left: 2px;
    font-family: "Liberation Sans", sans-serif;
    font-size: 12px;
    letter-spacing: -0.6px;
    white-space: nowrap;
    color: #333;
}
.sgroup, .sright {
    display: flex;
    align-items: center;
    height: 100%;
    gap: 1px;
}
.sgroup {
    gap: 2px;
}
.sright {
    margin-left: auto;
    margin-right: 2px;
}
.sb {
    height: 19px;
    width: 20px;
    flex: none;
    display: flex;
    align-items: center;
    justify-content: center;
    background: #a0a0a0;
}
.sb .ic {
    width: 17px;
    height: 17px;
}
.sb.lit {
    background: #bcd9ea;
}
.sb.w21 {
    width: 21px;
}
.sb.txt {
    width: 42px;
    font-family: "Liberation Sans", sans-serif;
    font-size: 12px;
    letter-spacing: -0.3px;
}
.sb.scale {
    width: 49px;
    gap: 2px;
    font-family: "Liberation Sans", sans-serif;
    font-size: 12px;
}
.sb.scale b {
    font-size: 9px;
}
.sb.lamp {
    width: 26px;
    background: #777;
    border: 1px solid #444;
}
.sgap {
    width: 13px;
    flex: none;
}
.sgap.g-b {
    width: 6px;
}

/* popup menus */
.menu {
    position: absolute;
    background: #f4f4f4;
    border: 1px solid #999;
    color: #333;
}
.menu ul {
    list-style: none;
    margin: 0;
    padding: 0;
}
.menu li {
    height: 21.8px;
    display: flex;
    align-items: center;
    white-space: nowrap;
    position: relative;
}
.menu li.sep {
    height: 8px;
}
.menu li.sep::after {
    content: "";
    position: absolute;
    left: 28px;
    right: 2px;
    top: 4px;
    height: 1px;
    background: #ddd;
}
.snapmenu {
    left: 284px;
    top: 320px;
    width: 201px;
    height: 390px;
    padding: 0 1px;
    font-size: 11.2px;
    background: linear-gradient(90deg, #f1f1f1 28px, #e2e2e2 28px, #fff 29px, #f5f5f5 30px);
}
.dispmenu {
    left: 480px;
    top: 401px;
    width: 267px;
    height: 310px;
    padding: 0 1px;
    font-size: 11.6px;
    background: linear-gradient(90deg, #f1f1f1 28px, #e2e2e2 28px, #fff 29px, #f5f5f5 30px);
    z-index: 2;
}
.gut {
    height: 21px;
    flex: none;
    display: flex;
    align-items: center;
    justify-content: center;
}
.snapmenu .gut {
    width: 21px;
    margin: 0 9px 0 1px;
}
.dispmenu .gut {
    width: 20px;
    margin: 0 11px 0 1px;
}
.gut.boxed {
    background: linear-gradient(#f7f9fb, #eaf0f6);
    border: 1px solid #cfe0ee;
    border-radius: 2px;
}
.tick {
    width: 14px;
    height: 14px;
}
.menu li.hot {
    background: linear-gradient(#fbfcfd, #dfeaf5);
    outline: 1px solid #d2e0ee;
    outline-offset: -1px;
    border-radius: 2px;
}
.sub {
    margin-left: auto;
    margin-right: 8px;
    font-weight: normal;
    font-size: 11px;
    color: #222;
}
.cursor {
    position: absolute;
    left: 562px;
    top: 413px;
    z-index: 3;
}
```
